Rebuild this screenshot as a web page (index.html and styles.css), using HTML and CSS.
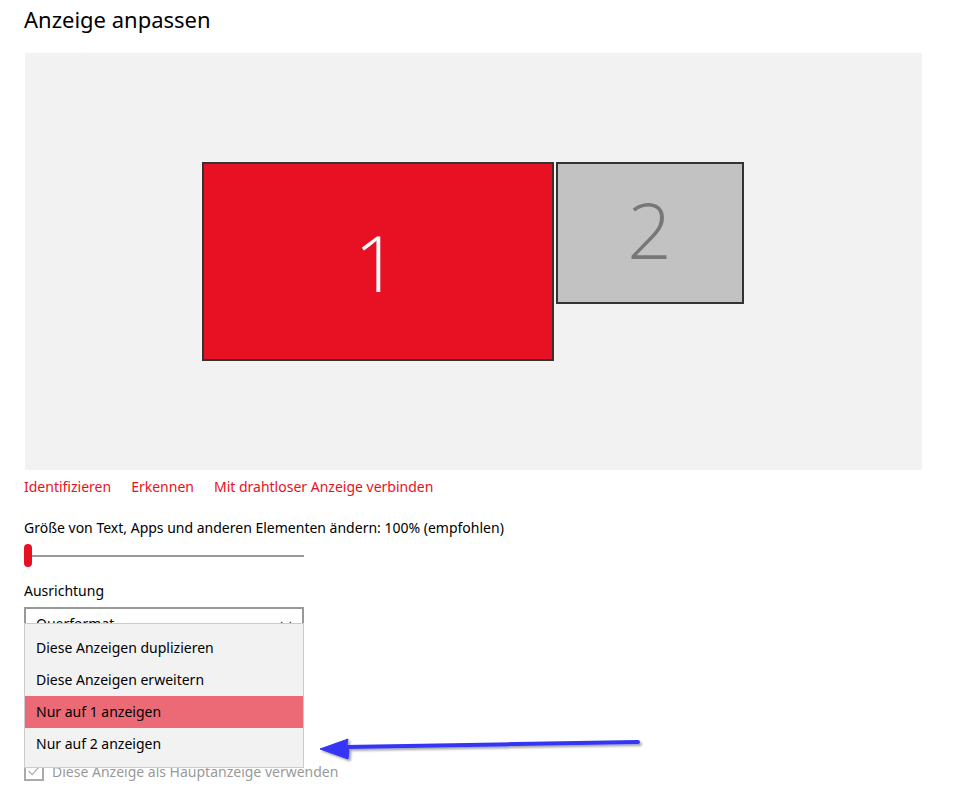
FILE: index.html
```html
<!DOCTYPE html>
<html lang="de">
<head>
<meta charset="utf-8">
<title>Anzeige anpassen</title>
<link rel="stylesheet" href="styles.css">
</head>
<body>
<div class="page">
  <h1 class="title">Anzeige anpassen</h1>
  <div class="canvas">
    <div class="monitors">
      <div class="monitor monitor-1"><span>1</span></div>
      <div class="monitor monitor-2"><span>2</span></div>
    </div>
  </div>
  <div class="links">
    <a class="link">Identifizieren</a>
    <a class="link">Erkennen</a>
    <a class="link">Mit drahtloser Anzeige verbinden</a>
  </div>
  <div class="label scale-label">Größe von Text, Apps und anderen Elementen ändern: 100% (empfohlen)</div>
  <div class="slider">
    <div class="thumb"></div>
    <div class="track"></div>
  </div>
  <div class="label orient-label">Ausrichtung</div>
  <div class="dropdown-wrap">
    <div class="dropdown">
      <span class="dropdown-value">Querformat</span>
      <svg class="chevron" width="12" height="8" viewBox="0 0 12 8"><path d="M1 1 L6 6 L11 1" fill="none" stroke="#555" stroke-width="1.2"/></svg>
    </div>
    <ul class="menu">
      <li class="menu-item">Diese Anzeigen duplizieren</li>
      <li class="menu-item">Diese Anzeigen erweitern</li>
      <li class="menu-item selected">Nur auf 1 anzeigen</li>
      <li class="menu-item">Nur auf 2 anzeigen</li>
    </ul>
  </div>
  <div class="checkrow">
    <span class="checkbox"><svg width="18" height="18" viewBox="0 0 18 18"><path d="M3 9 L7 13 L15 4" fill="none" stroke="#aaa" stroke-width="1.3"/></svg></span>
    <span class="check-label">Diese Anzeige als Hauptanzeige verwenden</span>
  </div>
</div>
<svg class="arrow" width="340" height="40" viewBox="0 0 340 40">
  <defs>
    <filter id="sh" x="-10%" y="-50%" width="120%" height="200%">
      <feDropShadow dx="2" dy="2" stdDeviation="1.2" flood-color="#000" flood-opacity="0.35"/>
    </filter>
  </defs>
  <g filter="url(#sh)" fill="#3535f5" stroke="#3535f5">
    <path d="M26 12 L318 7" stroke-width="4" stroke-linecap="round" fill="none"/>
    <path d="M0 14 L28 4 L27 10 L29 16 L28 24 Z" stroke-width="1" stroke-linejoin="round"/>
  </g>
</svg>
</body>
</html>
```
FILE: styles.css
```css
html, body {
  margin: 0;
  padding: 0;
  background: #ffffff;
}
body {
  font-family: "Noto Sans", "Open Sans", "DejaVu Sans", sans-serif;
  color: #000;
  width: 967px;
  height: 788px;
  overflow: hidden;
  position: relative;
}
.page {
  padding-left: 24px;
}
.title {
  margin: 0;
  padding-top: 3px;
  font-size: 22px;
  font-weight: 400;
  line-height: 32px;
  height: 50px;
}
.canvas {
  margin-left: 1px;
  width: 897px;
  height: 417px;
  background: #f2f2f2;
  display: flex;
  align-items: center;
  justify-content: center;
}
.monitors {
  display: flex;
  align-items: flex-start;
  gap: 2px;
  margin-right: 2px;
}
.monitor {
  box-sizing: border-box;
  border: 2px solid #333333;
  display: flex;
  align-items: center;
  justify-content: center;
  font-family: "Open Sans", "Noto Sans", sans-serif;
  font-weight: 300;
}
.monitor-1 {
  width: 352px;
  height: 199px;
  background: #e81123;
  color: #ffffff;
  font-size: 78px;
}
.monitor-1 span {
  margin-right: 2px;
}
.monitor-2 {
  width: 188px;
  height: 142px;
  background: #c2c2c2;
  color: #777777;
  font-size: 78px;
}
.monitor-2 span {
  margin-top: -8px;
}
.links {
  display: flex;
  gap: 20px;
  margin-top: 5px;
  height: 24px;
  line-height: 24px;
  font-size: 14px;
}
.link {
  color: #e81123;
}
.label {
  font-size: 14px;
  line-height: 20px;
}
.scale-label {
  margin-top: 19px;
}
.slider {
  margin-top: 6px;
  display: flex;
  align-items: center;
  width: 280px;
  height: 23px;
}
.thumb {
  width: 8px;
  height: 23px;
  border-radius: 4px;
  background: #e81123;
}
.track {
  flex: 1;
  height: 2px;
  background: #999999;
}
.orient-label {
  margin-top: 14px;
}
.dropdown-wrap {
  position: relative;
  margin-top: 6px;
  width: 280px;
}
.dropdown {
  box-sizing: border-box;
  height: 33px;
  border: 2px solid #999999;
  background: #fff;
  display: flex;
  align-items: flex-start;
  justify-content: space-between;
  padding: 4px 10px 0 10px;
  font-size: 14px;
  line-height: 22px;
  overflow: hidden;
}
.chevron {
  margin-top: 8px;
}
.menu {
  position: absolute;
  left: 0;
  top: 16px;
  box-sizing: border-box;
  width: 280px;
  margin: 0;
  padding: 8px 0 7px 0;
  list-style: none;
  background: #f2f2f2;
  border: 1px solid #cccccc;
  z-index: 2;
}
.menu-item {
  height: 32px;
  line-height: 32px;
  padding-left: 11px;
  font-size: 14px;
  color: #000;
}
.menu-item.selected {
  background: #ec6a76;
}
.checkrow {
  margin-top: 120px;
  display: flex;
  align-items: center;
  gap: 8px;
  height: 22px;
}
.checkbox {
  box-sizing: border-box;
  width: 20px;
  height: 20px;
  border: 2px solid #aaaaaa;
  display: flex;
  align-items: center;
  justify-content: center;
}
.check-label {
  font-size: 14px;
  color: #999999;
}
.arrow {
  position: absolute;
  left: 320px;
  top: 735px;
  z-index: 3;
}
```
